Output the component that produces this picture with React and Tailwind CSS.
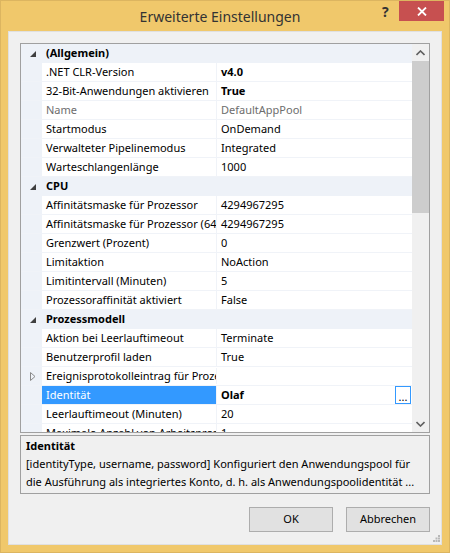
import React from 'react';

const groups = [
  {
    title: '(Allgemein)',
    rows: [
      { name: '.NET CLR-Version', value: 'v4.0', bold: true },
      { name: '32-Bit-Anwendungen aktivieren', value: 'True', bold: true },
      { name: 'Name', value: 'DefaultAppPool', muted: true },
      { name: 'Startmodus', value: 'OnDemand' },
      { name: 'Verwalteter Pipelinemodus', value: 'Integrated' },
      { name: 'Warteschlangenlänge', value: '1000' },
    ],
  },
  {
    title: 'CPU',
    rows: [
      { name: 'Affinitätsmaske für Prozessor', value: '4294967295' },
      { name: 'Affinitätsmaske für Prozessor (64-Bit-Option)', value: '4294967295' },
      { name: 'Grenzwert (Prozent)', value: '0' },
      { name: 'Limitaktion', value: 'NoAction' },
      { name: 'Limitintervall (Minuten)', value: '5' },
      { name: 'Prozessoraffinität aktiviert', value: 'False' },
    ],
  },
  {
    title: 'Prozessmodell',
    rows: [
      { name: 'Aktion bei Leerlauftimeout', value: 'Terminate' },
      { name: 'Benutzerprofil laden', value: 'True' },
      { name: 'Ereignisprotokolleintrag für Prozessmodell', value: '', collapsed: true, wide: true },
      { name: 'Identität', value: 'Olaf', bold: true, selected: true },
      { name: 'Leerlauftimeout (Minuten)', value: '20' },
      { name: 'Maximale Anzahl von Arbeitsprozessen', value: '1' },
    ],
  },
];

const ExpandedArrow = () => (
  <svg width="6" height="6" viewBox="0 0 6 6" className="block">
    <path d="M6 0 L6 6 L0 6 Z" fill="#404040" />
  </svg>
);

const CollapsedArrow = () => (
  <svg width="6" height="9" viewBox="0 0 6 9" className="block">
    <path d="M0.5 0.5 L5 4.5 L0.5 8.5 Z" fill="none" stroke="#8a8a8a" />
  </svg>
);

const Row = ({ row }) => (
  <div className="flex h-[19px] border-b border-[#f0f3f8]">
    <div className="w-[21px] shrink-0 bg-[#eef2f8] flex items-center justify-center pl-[2px]">
      {row.collapsed && <CollapsedArrow />}
    </div>
    {row.wide ? (
      <div className="flex-1 flex items-center bg-white overflow-hidden whitespace-nowrap">
        <span className="w-[175px] pl-[4px] overflow-hidden shrink-0 border-r border-[#f0f3f8]">{row.name}</span>
      </div>
    ) : (
      <>
        <div
          className={
            'w-[175px] shrink-0 flex items-center pl-[4px] overflow-hidden whitespace-nowrap border-r border-[#f0f3f8] ' +
            (row.selected ? 'bg-[#3399ff] text-white' : 'bg-white') +
            (row.muted ? ' text-[#6d6d6d]' : '')
          }
        >
          {row.name}
        </div>
        <div
          className={
            'flex-1 flex items-center pl-[4px] pr-[1px] bg-white whitespace-nowrap overflow-hidden ' +
            (row.bold ? 'font-bold ' : '') +
            (row.muted ? 'text-[#6d6d6d]' : '')
          }
        >
          <span className="flex-1">{row.value}</span>
          {row.selected && (
            <span className="w-[16px] h-[18px] border border-[#3399ff] bg-white flex items-end justify-center font-normal text-[11px] leading-[13px]">
              ...
            </span>
          )}
        </div>
      </>
    )}
  </div>
);

const Header = ({ title }) => (
  <div className="flex h-[19px] bg-[#eef2f8] border-b border-[#eef2f8]">
    <div className="w-[21px] shrink-0 flex items-center justify-center pl-[2px] pt-[1px]">
      <ExpandedArrow />
    </div>
    <div className="flex items-center pl-[4px] font-bold">{title}</div>
  </div>
);

const Chevron = ({ up }) => (
  <svg width="9" height="6" viewBox="0 0 9 6" className="block">
    <path
      d={up ? 'M0.5 5 L4.5 1 L8.5 5' : 'M0.5 1 L4.5 5 L8.5 1'}
      fill="none"
      stroke="#606060"
      strokeWidth="1.6"
    />
  </svg>
);

export default function App() {
  return (
    <div
      className="w-[450px] h-[553px] bg-[#f0c86b] border border-[#dcb560] flex flex-col text-[11px] text-black"
      style={{ fontFamily: '"Noto Sans", "Segoe UI", sans-serif' }}
    >
      {/* Title bar */}
      <div className="h-[30px] flex items-start shrink-0">
        <div className="flex-1 pl-[57px] pt-[5px] text-center text-[14px] text-[#333333]">
          Erweiterte Einstellungen
        </div>
        <div className="w-[14px] pt-[3px] text-[14px] font-bold text-[#333333] leading-[16px]">?</div>
        <div className="w-[45px] h-[20px] mr-[5px] ml-[3px] bg-[#c75050] flex items-center justify-center">
          <svg width="10" height="9" viewBox="0 0 10 9">
            <path d="M1 0.5 L9 8.5 M9 0.5 L1 8.5" stroke="#ffffff" strokeWidth="1.8" />
          </svg>
        </div>
      </div>

      {/* Client area */}
      <div className="flex-1 mx-[7px] mb-[7px] bg-[#f0f0f0] border border-[#e0e0e0] px-[11px] pt-[11px] flex flex-col">
        {/* Property grid */}
        <div className="h-[390px] border border-[#a0a0a0] flex overflow-hidden shrink-0">
          <div className="flex-1 overflow-hidden">
            {groups.map((g) => (
              <div key={g.title}>
                <Header title={g.title} />
                {g.rows.map((r) => (
                  <Row key={r.name} row={r} />
                ))}
              </div>
            ))}
          </div>
          <div className="w-[17px] shrink-0 bg-[#f0f0f0] flex flex-col">
            <div className="h-[17px] flex items-center justify-center">
              <Chevron up />
            </div>
            <div className="flex-1 flex flex-col">
              <div className="h-[152px] bg-[#cdcdcd]" />
            </div>
            <div className="h-[17px] flex items-center justify-center">
              <Chevron />
            </div>
          </div>
        </div>

        {/* Description */}
        <div className="mt-[2px] h-[59px] shrink-0 border border-[#a0a0a0] px-[5px] pt-[1px] leading-[18px] whitespace-nowrap overflow-hidden">
          <div className="font-bold">Identität</div>
          <div>[identityType, username, password] Konfiguriert den Anwendungspool für</div>
          <div>die Ausführung als integriertes Konto, d. h. als Anwendungspoolidentität ...</div>
        </div>

        {/* Buttons */}
        <div className="mt-[13px] flex justify-end gap-[13px] shrink-0">
          <button className="w-[84px] h-[25px] bg-[#e1e1e1] border border-[#adadad] text-[11px]">OK</button>
          <button className="w-[84px] h-[25px] bg-[#e1e1e1] border border-[#adadad] text-[11px]">Abbrechen</button>
        </div>

        {/* Resize grip */}
        <div className="flex-1 flex justify-end items-end -mr-[10px] pb-[2px]">
          <svg width="7" height="7" viewBox="0 0 7 7">
            <rect x="5" y="0" width="2" height="2" fill="#b8b8b8" />
            <rect x="2.5" y="2.5" width="2" height="2" fill="#b8b8b8" />
            <rect x="5" y="2.5" width="2" height="2" fill="#b8b8b8" />
            <rect x="0" y="5" width="2" height="2" fill="#b8b8b8" />
            <rect x="2.5" y="5" width="2" height="2" fill="#b8b8b8" />
            <rect x="5" y="5" width="2" height="2" fill="#b8b8b8" />
          </svg>
        </div>
      </div>
    </div>
  );
}
